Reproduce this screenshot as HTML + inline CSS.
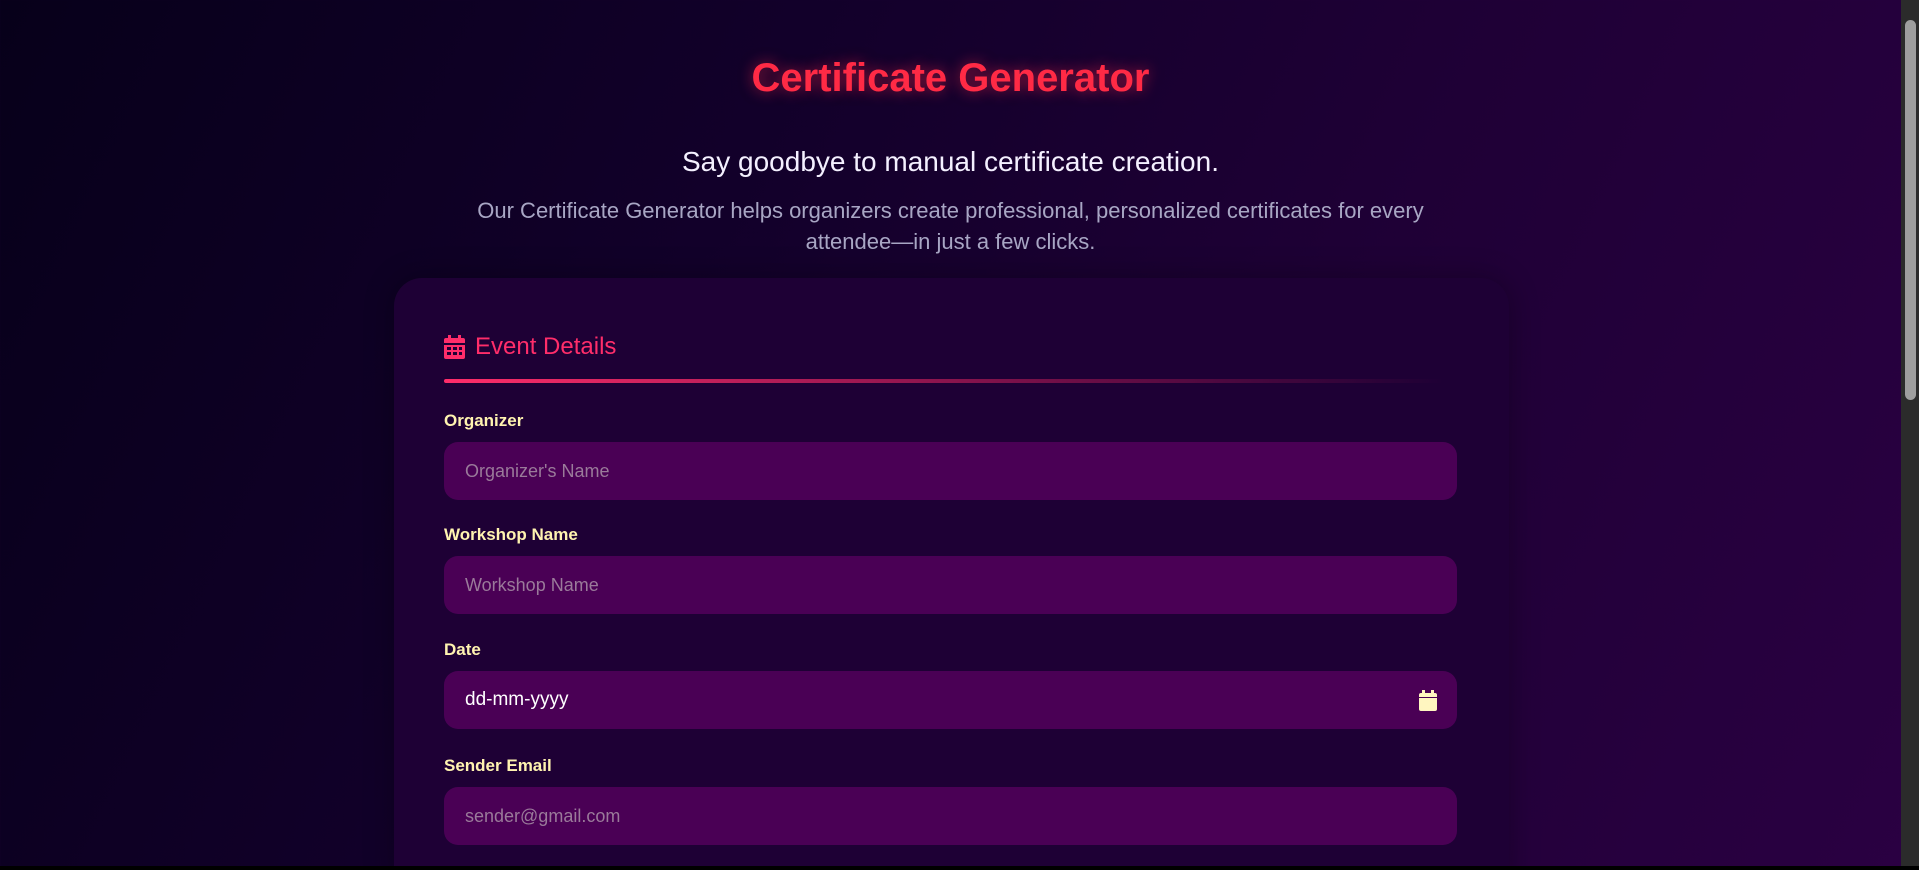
<!DOCTYPE html>
<html><head><meta charset="utf-8"><style>
*{margin:0;padding:0;box-sizing:border-box}
html,body{width:1919px;height:870px;overflow:hidden}
body{font-family:"Liberation Sans",sans-serif;background:linear-gradient(115deg,#07001a 0%,#12002a 35%,#1f0036 65%,#2a0042 100%);position:relative}
.t{position:absolute;left:0;width:1901px;text-align:center}
h1{position:absolute;left:0;width:1901px;text-align:center;top:56px;font-size:40px;font-weight:bold;color:#ff2a45;text-shadow:0 0 14px rgba(255,40,70,.6)}
.card{position:absolute;left:394px;top:278px;width:1115px;height:620px;background:#1e0035;border-radius:28px;box-shadow:0 0 30px rgba(0,0,0,.3)}
.hd{position:absolute;left:444px;top:333px;color:#ff2d6a;font-size:24px;display:flex;align-items:center;gap:10px}
.div{position:absolute;left:444px;top:379px;width:1000px;height:4px;border-radius:2px;background:linear-gradient(90deg,#ff2d6a,rgba(200,30,90,.5) 60%,rgba(60,0,60,0))}
.lb{position:absolute;left:444px;font-size:17px;font-weight:bold;color:#fff3b0}
.in{position:absolute;left:444px;width:1013px;height:58px;background:#4a0055;border-radius:14px;color:#9a7a9a;font-size:18px;line-height:58px;padding-left:21px}
.sb{position:absolute;right:0;top:0;width:18px;height:866px;background:#2b2b2b}
.th{position:absolute;right:3px;top:20px;width:11px;height:380px;background:#9e9e9e;border-radius:6px}
</style></head><body>
<h1>Certificate Generator</h1>
<div class="t" style="top:146px;font-size:28px;color:#f4f0ff;font-weight:300">Say goodbye to manual certificate creation.</div>
<div class="t" style="top:195px;font-size:22px;line-height:31px;color:#a8a6c4"><div style="width:1000px;margin:0 auto">Our Certificate Generator helps organizers create professional, personalized certificates for every attendee—in just a few clicks.</div></div>
<div class="card"></div>
<div class="hd"><svg width="21" height="24" viewBox="0 0 21 24"><rect x="4" y="0" width="3" height="5" fill="#ff2d6a"/><rect x="14" y="0" width="3" height="5" fill="#ff2d6a"/><rect x="0" y="3" width="21" height="21" rx="2" fill="#ff2d6a"/><g fill="#1e0035"><rect x="0" y="8" width="21" height="2"/><rect x="3" y="12" width="4" height="3"/><rect x="9" y="12" width="4" height="3"/><rect x="15" y="12" width="3" height="3"/><rect x="3" y="17" width="4" height="3"/><rect x="9" y="17" width="4" height="3"/><rect x="15" y="17" width="3" height="3"/></g></svg><span>Event Details</span></div>
<div class="div"></div>
<div class="lb" style="top:411px">Organizer</div>
<div class="in" style="top:442px">Organizer's Name</div>
<div class="lb" style="top:525px">Workshop Name</div>
<div class="in" style="top:556px">Workshop Name</div>
<div class="lb" style="top:640px">Date</div>
<div class="in" style="top:671px;color:#fff;font-size:19px">dd-mm-yyyy<svg style="position:absolute;right:20px;top:19px" width="18" height="21" viewBox="0 0 18 21"><rect x="3" y="0" width="3" height="4" fill="#fff6c0"/><rect x="12" y="0" width="3" height="4" fill="#fff6c0"/><rect x="0" y="3" width="18" height="18" rx="2" fill="#fff6c0"/><rect x="0" y="7" width="18" height="1" fill="#4a0055"/></svg></div>
<div class="lb" style="top:756px">Sender Email</div>
<div class="in" style="top:787px">sender@gmail.com</div>
<div class="sb"><div class="th"></div></div>
<div style="position:absolute;left:0;bottom:0;width:1919px;height:4px;background:#000"></div>
</body></html>
